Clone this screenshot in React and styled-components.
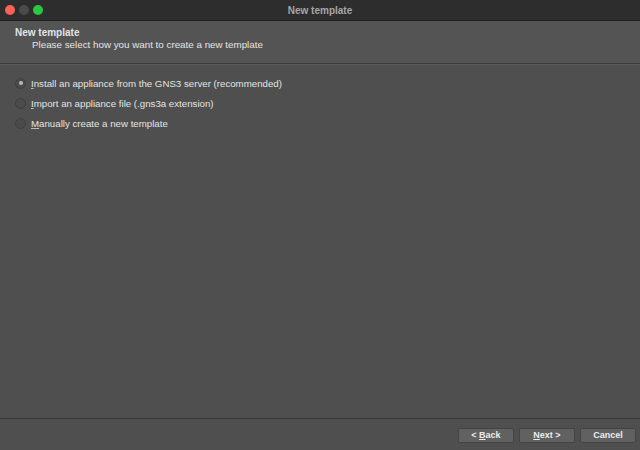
import React from 'react';
import styled, {createGlobalStyle} from 'styled-components';

const GlobalStyle = createGlobalStyle`
    html, body {
        margin: 0;
        padding: 0;
        background: #4f4f4f;
        font-family: "Liberation Sans", Arial, sans-serif;
    }
`
const Window = styled.div`
    width: 640px;
    height: 450px;
    display: flex;
    flex-direction: column;
    background: #4f4f4f;
    color: #e4e4e4;
    overflow: hidden;
`
const TitleBar = styled.div`
    height: 20px;
    flex: none;
    display: grid;
    grid-template-columns: 1fr auto 1fr;
    align-items: center;
    background: #2d2d2d;
    border-bottom: 1px solid #1e1e1e;
`
const Lights = styled.div`
    display: flex;
    gap: 4px;
    padding-left: 5px;
`
const Light = styled.span`
    width: 10px;
    height: 10px;
    border-radius: 50%;
    background: ${p => p.color};
`
const Title = styled.div`
    font-size: 10px;
    font-weight: bold;
    color: #a6a6a6;
`
const Header = styled.div`
    height: 43px;
    flex: none;
    padding: 6px 0 0 15px;
    box-sizing: border-box;
    background: #545454;
    border-bottom: 1px solid #3a3a3a;
    box-shadow: 0 1px 0 #5a5a5a;
`
const HeaderTitle = styled.div`
    font-size: 10px;
    font-weight: bold;
    line-height: 12px;
`
const HeaderSub = styled.div`
    font-size: 9.8px;
    line-height: 12px;
    padding-left: 17px;
`
const Body = styled.div`
    flex: 1;
    display: flex;
    flex-direction: column;
    padding: 9px 0 0 15px;
`
const Option = styled.label`
    display: flex;
    align-items: center;
    gap: 5px;
    height: 20px;
    font-size: 9.7px;
    u { text-decoration-color: #bdbdbd; }
`
const Radio = styled.span`
    width: 9px;
    height: 9px;
    border-radius: 50%;
    border: 1px solid #3e3e3e;
    background: #4b4b4b;
    display: flex;
    align-items: center;
    justify-content: center;
    &::after {
        content: "";
        width: 4px;
        height: 4px;
        border-radius: 50%;
        background: ${p => p.checked ? '#b8b8b8' : 'transparent'};
    }
`
const Footer = styled.div`
    height: 31px;
    flex: none;
    display: flex;
    justify-content: flex-end;
    align-items: center;
    gap: 5px;
    padding-right: 4px;
    border-top: 1px solid #383838;
`
const Button = styled.button`
    width: 56px;
    height: 15px;
    padding: 0;
    margin-top: 1px;
    background: #616161;
    border: 1px solid #444;
    border-radius: 2px;
    color: #ececec;
    font-family: "Liberation Sans", Arial, sans-serif;
    font-size: 9px;
    font-weight: bold;
`

const options = [
    {key: 'I', rest: 'nstall an appliance from the GNS3 server (recommended)', checked: true},
    {key: 'I', rest: 'mport an appliance file (.gns3a extension)'},
    {key: 'M', rest: 'anually create a new template'},
]

const App = () => {
    return (
        <Window>
            <GlobalStyle/>
            <TitleBar>
                <Lights>
                    <Light color="#fe5f57"/>
                    <Light color="#4a4a4a"/>
                    <Light color="#28c840"/>
                </Lights>
                <Title>New template</Title>
                <div/>
            </TitleBar>
            <Header>
                <HeaderTitle>New template</HeaderTitle>
                <HeaderSub>Please select how you want to create a new template</HeaderSub>
            </Header>
            <Body>
                {options.map((o, i) => (
                    <Option key={i}>
                        <Radio checked={o.checked}/>
                        <span><u>{o.key}</u>{o.rest}</span>
                    </Option>
                ))}
            </Body>
            <Footer>
                <Button>&lt; <u>B</u>ack</Button>
                <Button><u>N</u>ext &gt;</Button>
                <Button>Cancel</Button>
            </Footer>
        </Window>
    )
}

export default App
